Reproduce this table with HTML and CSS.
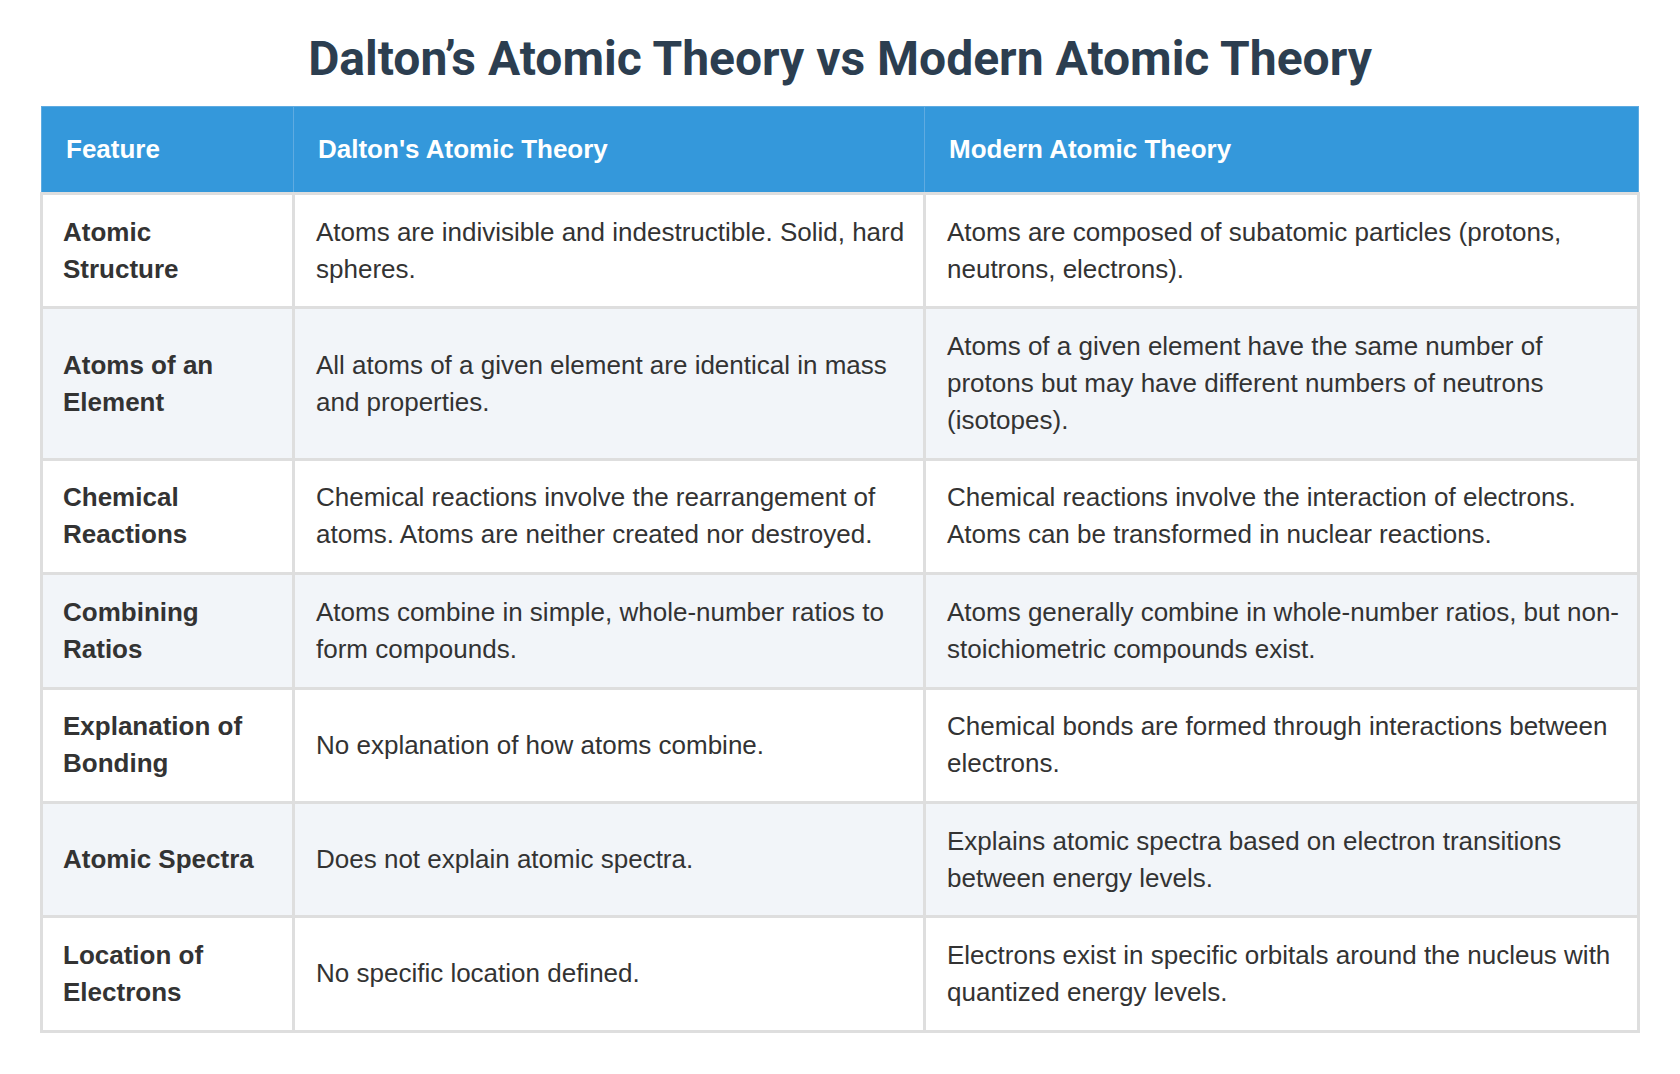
FILE: index.html
```html
<!DOCTYPE html>
<html lang="en">
<head>
<meta charset="utf-8">
<title>Dalton’s Atomic Theory vs Modern Atomic Theory</title>
<link rel="stylesheet" href="styles.css">
</head>
<body>
<h1 class="title">Dalton’s Atomic Theory vs Modern Atomic Theory</h1>
<table class="compare">
  <colgroup>
    <col class="c-feature">
    <col class="c-dalton">
    <col class="c-modern">
  </colgroup>
  <thead>
    <tr>
      <th>Feature</th>
      <th>Dalton's Atomic Theory</th>
      <th>Modern Atomic Theory</th>
    </tr>
  </thead>
  <tbody>
    <tr>
      <td class="feat">Atomic Structure</td>
      <td>Atoms are indivisible and indestructible. Solid, hard spheres.</td>
      <td>Atoms are composed of subatomic particles (protons, neutrons, electrons).</td>
    </tr>
    <tr>
      <td class="feat">Atoms of an Element</td>
      <td>All atoms of a given element are identical in mass and properties.</td>
      <td>Atoms of a given element have the same number of protons but may have different numbers of neutrons (isotopes).</td>
    </tr>
    <tr>
      <td class="feat">Chemical Reactions</td>
      <td>Chemical reactions involve the rearrangement of atoms. Atoms are neither created nor destroyed.</td>
      <td>Chemical reactions involve the interaction of electrons. Atoms can be transformed in nuclear reactions.</td>
    </tr>
    <tr>
      <td class="feat">Combining Ratios</td>
      <td>Atoms combine in simple, whole-number ratios to form compounds.</td>
      <td>Atoms generally combine in whole-number ratios, but non-stoichiometric compounds exist.</td>
    </tr>
    <tr>
      <td class="feat">Explanation of Bonding</td>
      <td>No explanation of how atoms combine.</td>
      <td>Chemical bonds are formed through interactions between electrons.</td>
    </tr>
    <tr>
      <td class="feat">Atomic Spectra</td>
      <td>Does not explain atomic spectra.</td>
      <td>Explains atomic spectra based on electron transitions between energy levels.</td>
    </tr>
    <tr>
      <td class="feat">Location of Electrons</td>
      <td>No specific location defined.</td>
      <td>Electrons exist in specific orbitals around the nucleus with quantized energy levels.</td>
    </tr>
  </tbody>
</table>
</body>
</html>
```

FILE: styles.css
```css
html, body {
  margin: 0;
  padding: 0;
  background: #ffffff;
}

body {
  font-family: "Liberation Sans", Arial, sans-serif;
  color: #333333;
}

.title {
  font-family: Roboto, "Liberation Sans", sans-serif;
  font-weight: 700;
  font-size: 48px;
  line-height: 56px;
  color: #2c3e50;
  text-align: center;
  margin: 31px 0 19px;
}

.compare {
  width: 1597px;
  margin: 0 auto;
  border-collapse: collapse;
  table-layout: fixed;
  font-size: 26px;
  line-height: 37px;
}

.c-feature { width: 252px; }
.c-dalton { width: 631px; }
.c-modern { width: 714px; }

.compare th {
  background: #3498db;
  color: #ffffff;
  font-weight: 700;
  text-align: left;
  padding: 24px 20px 24px 24px;
  border: 1px solid #5fabe1;
}

.compare td {
  padding: 18.7px 18px 18.7px 21px;
  border: 3px solid #dedede;
  vertical-align: middle;
  background: #ffffff;
}

.compare tbody tr:nth-child(even) td {
  background: #f2f5f9;
}

.compare td.feat {
  font-weight: 700;
  padding-left: 20px;
  padding-right: 20px;
}
```
